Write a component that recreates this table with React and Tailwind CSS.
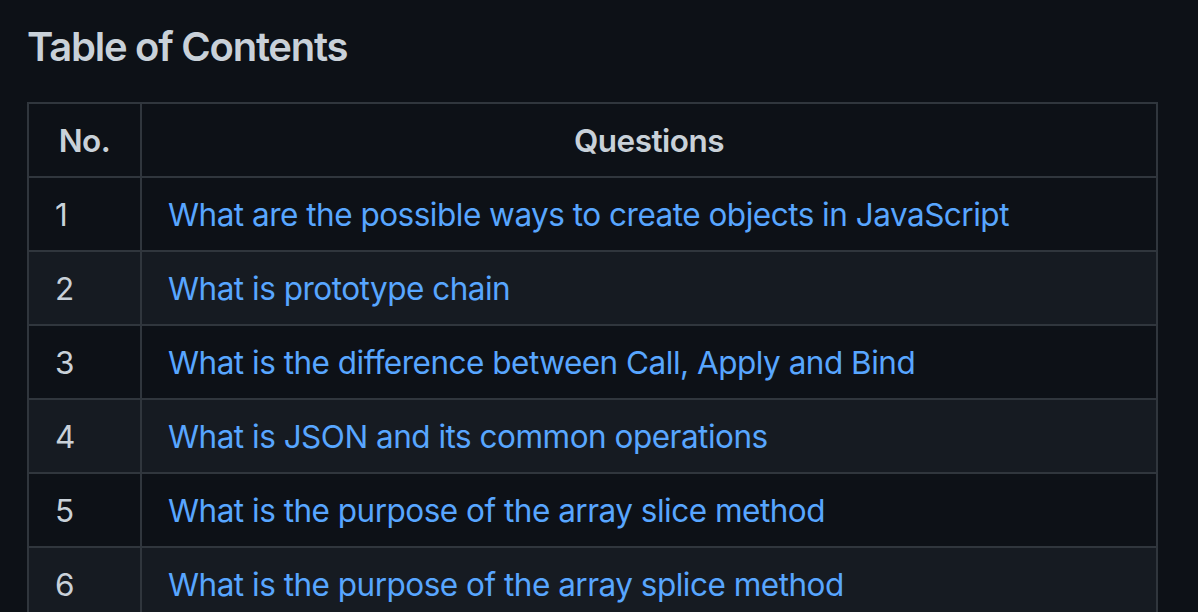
import React from 'react';

const questions = [
  'What are the possible ways to create objects in JavaScript',
  'What is prototype chain',
  'What is the difference between Call, Apply and Bind',
  'What is JSON and its common operations',
  'What is the purpose of the array slice method',
  'What is the purpose of the array splice method',
];

const App = () => {
  return (
    <div className="min-h-[612px] h-[612px] overflow-hidden bg-[#0d1117] pl-[27px] pt-[22px] font-['Inter','Liberation_Sans',sans-serif] text-[#c9d1d9]">
      <h3 className="text-[40px] font-semibold leading-[50px] tracking-[-1.25px]">Table of Contents</h3>
      <table className="mt-[30px] w-[1131px] table-fixed border-collapse text-[31.5px] leading-[48px] tracking-[-0.5px]">
        <colgroup>
          <col className="w-[113px]" />
          <col />
        </colgroup>
        <thead>
          <tr className="bg-[#0d1117]">
            <th className="border-2 border-[#30363d] px-[26px] pt-[13px] pb-[11px] text-center font-semibold">No.</th>
            <th className="border-2 border-[#30363d] px-[26px] pt-[13px] pb-[11px] text-center font-semibold">Questions</th>
          </tr>
        </thead>
        <tbody>
          {questions.map((q, i) => (
            <tr key={i} className={i % 2 === 1 ? 'bg-[#161b22]' : 'bg-[#0d1117]'}>
              <td className="border-2 border-[#30363d] px-[26px] pt-[13px] pb-[11px]">{i + 1}</td>
              <td className="border-2 border-[#30363d] px-[26px] pt-[13px] pb-[11px]">
                <a href="#" className="text-[#58a6ff]">{q}</a>
              </td>
            </tr>
          ))}
        </tbody>
      </table>
    </div>
  );
};

export default App;
